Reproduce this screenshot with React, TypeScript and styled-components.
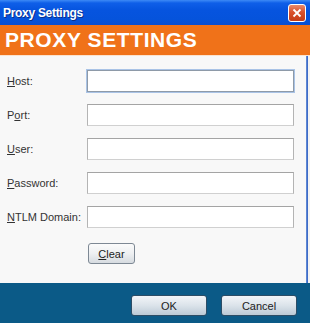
import { Fragment } from 'react';
import styled, { createGlobalStyle } from 'styled-components';

const GlobalStyle = createGlobalStyle`
  html, body {
    margin: 0;
    padding: 0;
    background: #f8f8f8;
  }
  * {
    box-sizing: border-box;
  }
`;

const Window = styled.div`
  width: 310px;
  height: 323px;
  display: flex;
  flex-direction: column;
  font-family: 'Liberation Sans', Arial, sans-serif;
  overflow: hidden;
`;

const TitleBar = styled.div`
  height: 25px;
  display: flex;
  align-items: center;
  justify-content: space-between;
  padding: 0 4px 0 3px;
  background: linear-gradient(
    to bottom,
    #3d8af6 0%,
    #0f5fe8 12%,
    #0654df 40%,
    #0553db 80%,
    #0a4ed0 100%
  );
`;

const TitleText = styled.span`
  color: #ffffff;
  font-weight: bold;
  font-size: 12px;
  letter-spacing: -0.3px;
  text-shadow: 1px 1px 0 #0a2f8a;
`;

const CloseButton = styled.div`
  width: 18px;
  height: 18px;
  border: 1px solid #ffffff;
  border-radius: 3px;
  background: linear-gradient(to bottom, #e88a6c 0%, #d9512c 45%, #c43c17 100%);
  display: flex;
  align-items: center;
  justify-content: center;
`;

const Banner = styled.div`
  height: 31px;
  background: #f07219;
  display: flex;
  align-items: center;
  padding-left: 5px;
  color: #ffffff;
  font-weight: bold;
  font-size: 21px;
  letter-spacing: 0.6px;
  border-bottom: 1px solid #fbe3cf;
`;

const Body = styled.div`
  flex: 1;
  display: flex;
`;

const Content = styled.div`
  flex: 1;
  background: #f8f8f8;
  padding: 14px 0 0 7px;
`;

const RightFrame = styled.div`
  width: 4px;
  background: linear-gradient(to right, #6f93d6, #2d5fc4 50%, #f3f3f3 51%);
`;

const Form = styled.div`
  display: grid;
  grid-template-columns: 80px 207px;
  grid-auto-rows: 22px;
  row-gap: 12px;
  align-items: center;
`;

const Label = styled.label`
  font-size: 11px;
  color: #333333;
  u {
    text-decoration: underline;
  }
`;

const Field = styled.div<{ $focused?: boolean }>`
  height: 22px;
  background: #ffffff;
  border: 1px solid ${({ $focused }) => ($focused ? '#8e9aa8' : '#b4b4b4')};
  border-top-color: ${({ $focused }) => ($focused ? '#8e9aa8' : '#a4a4a4')};
  border-bottom-color: ${({ $focused }) => ($focused ? '#8e9aa8' : '#d0d0d0')};
  box-shadow: ${({ $focused }) => ($focused ? '0 0 0 1px #a9c3e6' : 'none')};
`;

const ClearRow = styled.div`
  padding: 15px 0 0 81px;
`;

const Button = styled.div<{ $width: number }>`
  width: ${({ $width }) => $width}px;
  height: 21px;
  border: 1px solid #7d8894;
  border-radius: 3px;
  background: linear-gradient(to bottom, #fbfbfb 0%, #eef0f2 50%, #d6dbe0 100%);
  display: flex;
  align-items: center;
  justify-content: center;
  font-size: 11px;
  color: #222222;
`;

const Footer = styled.div`
  height: 40px;
  background: #0b5a87;
  display: flex;
  justify-content: flex-end;
  align-items: flex-start;
  gap: 14px;
  padding: 12px 13px 0 0;
`;

const FooterButton = styled(Button)`
  border-color: #2c4d66;
  background: linear-gradient(to bottom, #f2f5f8 0%, #dbe3ea 50%, #bccad6 100%);
`;

type Row = { label: string; pre: string; key: string; post: string; focused?: boolean };

const rows: Row[] = [
  { label: 'Host', pre: '', key: 'H', post: 'ost:', focused: true },
  { label: 'Port', pre: 'P', key: 'o', post: 'rt:' },
  { label: 'User', pre: '', key: 'U', post: 'ser:' },
  { label: 'Password', pre: '', key: 'P', post: 'assword:' },
  { label: 'NTLM', pre: '', key: 'N', post: 'TLM Domain:' },
];

export default function App() {
  return (
    <Window>
      <GlobalStyle />
      <TitleBar>
        <TitleText>Proxy Settings</TitleText>
        <CloseButton>
          <svg width="10" height="10" viewBox="0 0 10 10">
            <path d="M1.5 1.5 L8.5 8.5 M8.5 1.5 L1.5 8.5" stroke="#ffffff" strokeWidth="1.8" />
          </svg>
        </CloseButton>
      </TitleBar>
      <Banner>PROXY SETTINGS</Banner>
      <Body>
        <Content>
          <Form>
            {rows.map((r) => (
              <Fragment key={r.label}>
                <Label>
                  {r.pre}
                  <u>{r.key}</u>
                  {r.post}
                </Label>
                <Field $focused={r.focused} />
              </Fragment>
            ))}
          </Form>
          <ClearRow>
            <Button $width={47}>
              <span>
                <u>C</u>lear
              </span>
            </Button>
          </ClearRow>
        </Content>
        <RightFrame />
      </Body>
      <Footer>
        <FooterButton $width={76}>OK</FooterButton>
        <FooterButton $width={76}>Cancel</FooterButton>
      </Footer>
    </Window>
  );
}
